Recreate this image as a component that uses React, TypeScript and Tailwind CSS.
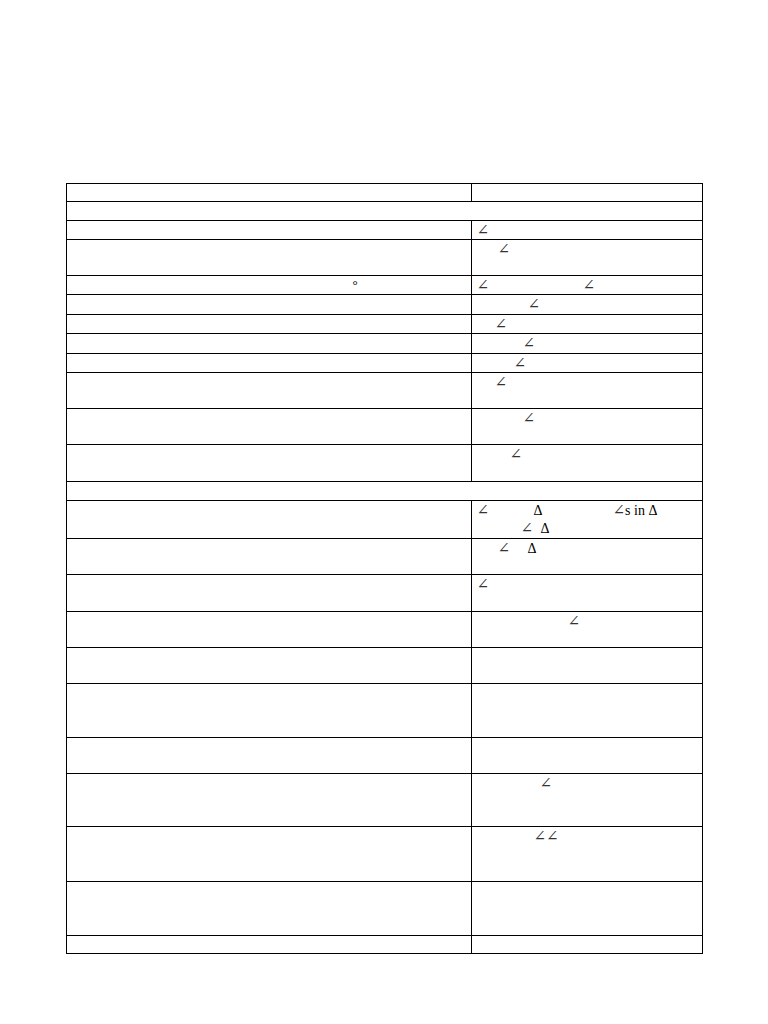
type Row = {
  h: string;
  span?: boolean;
  left?: React.ReactNode;
  right?: React.ReactNode;
};

function A() {
  return <span className="text-[15px] text-[#333]">∠</span>;
}

function L({ children }: { children: React.ReactNode }) {
  return <div className="h-[18px] whitespace-pre leading-[18px]">{children}</div>;
}

const rows: Row[] = [
  { h: "h-[18px]" },
  { h: "h-[19px]", span: true },
  { h: "h-[19px]", right: <L><span className="ml-[5px]"><A /></span></L> },
  { h: "h-[36px]", right: <L><span className="ml-[26px]"><A /></span></L> },
  {
    h: "h-[19px]",
    left: <L><span className="ml-[286px] align-top text-[13px]">°</span></L>,
    right: (
      <L>
        <span className="ml-[5px] inline-block w-[106px]"><A /></span>
        <A />
      </L>
    ),
  },
  { h: "h-[20px]", right: <L><span className="ml-[56px]"><A /></span></L> },
  { h: "h-[19px]", right: <L><span className="ml-[23px]"><A /></span></L> },
  { h: "h-[20px]", right: <L><span className="ml-[51px]"><A /></span></L> },
  { h: "h-[19px]", right: <L><span className="ml-[42px]"><A /></span></L> },
  { h: "h-[36px]", right: <L><span className="ml-[23px]"><A /></span></L> },
  { h: "h-[36px]", right: <L><span className="ml-[51px]"><A /></span></L> },
  { h: "h-[37px]", right: <L><span className="ml-[38px]"><A /></span></L> },
  { h: "h-[19px]", span: true },
  {
    h: "h-[38px]",
    right: (
      <>
        <L>
          <span className="ml-[5px] inline-block w-[57px]"><A /></span>
          <span className="inline-block w-[79px]">Δ</span>
          <span><A />s in Δ</span>
        </L>
        <L>
          <span className="ml-[49px] inline-block w-[20px]"><A /></span>
          <span>Δ</span>
        </L>
      </>
    ),
  },
  {
    h: "h-[36px]",
    right: (
      <L>
        <span className="ml-[26px] inline-block w-[30px]"><A /></span>
        <span>Δ</span>
      </L>
    ),
  },
  { h: "h-[37px]", right: <L><span className="ml-[5px]"><A /></span></L> },
  { h: "h-[36px]", right: <L><span className="ml-[96px]"><A /></span></L> },
  { h: "h-[36px]" },
  { h: "h-[54px]" },
  { h: "h-[36px]" },
  { h: "h-[53px]", right: <L><span className="ml-[68px]"><A /></span></L> },
  { h: "h-[55px]", right: <L><span className="ml-[62px]"><A /><A /></span></L> },
  { h: "h-[54px]" },
  { h: "h-[18px]" },
];

export default function App() {
  return (
    <div className="min-h-[1024px] bg-white pt-[183px] text-[14px] text-black [font-family:'Liberation_Serif','DejaVu_Serif',serif]">
      <div className="mx-auto w-[637px] border-l border-t border-black">
        {rows.map((r, i) =>
          r.span ? (
            <div key={i} className={`${r.h} border-b border-r border-black`} />
          ) : (
            <div key={i} className={`${r.h} grid grid-cols-[405px_1fr] border-b border-black`}>
              <div className="overflow-hidden border-r border-black">{r.left}</div>
              <div className="overflow-hidden border-r border-black">{r.right}</div>
            </div>
          )
        )}
      </div>
    </div>
  );
}
